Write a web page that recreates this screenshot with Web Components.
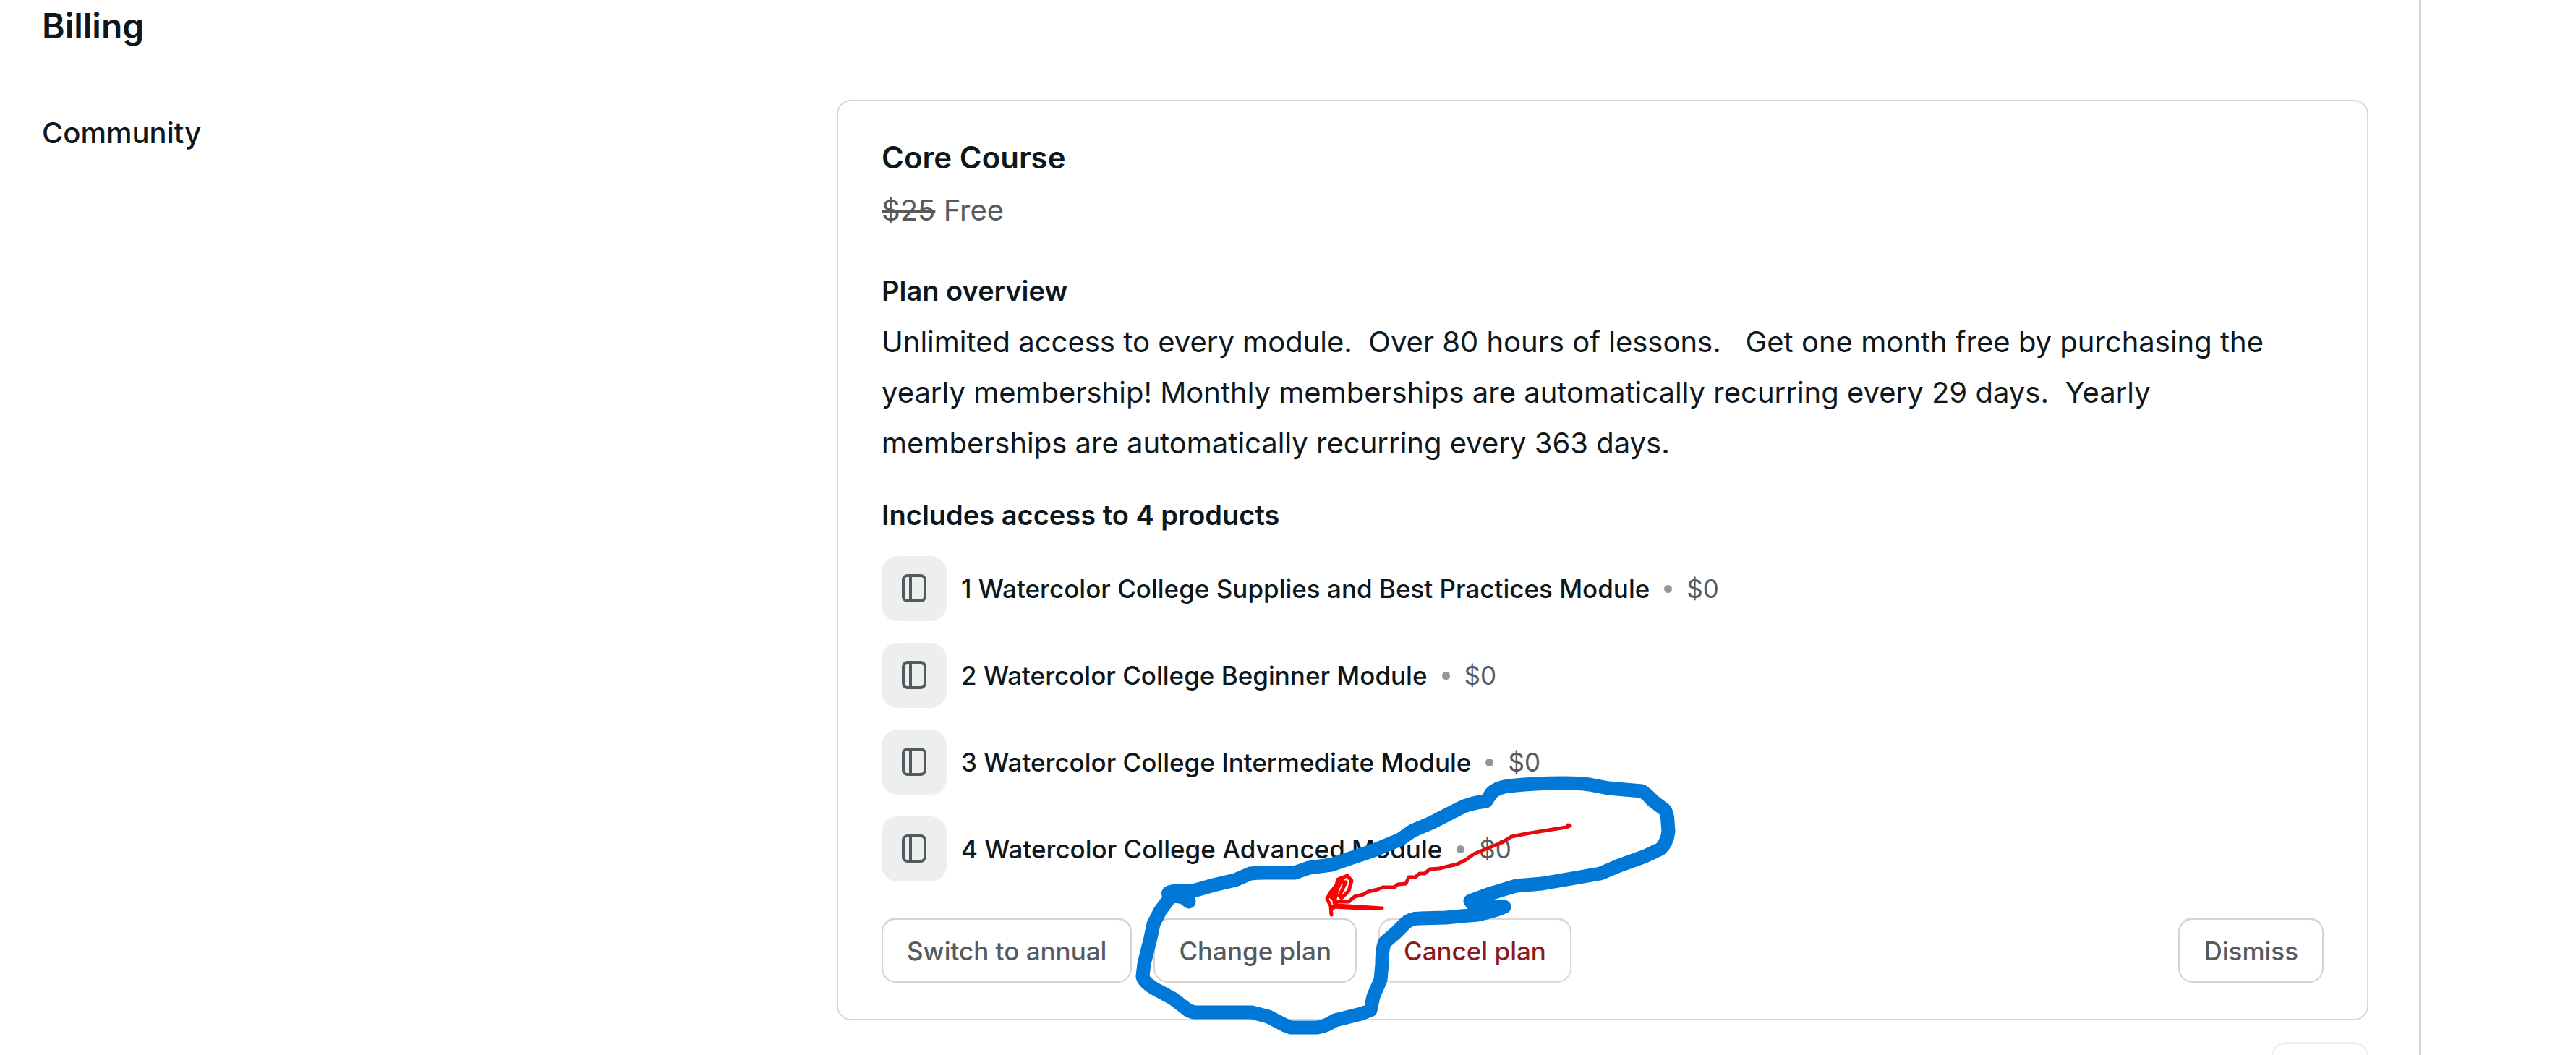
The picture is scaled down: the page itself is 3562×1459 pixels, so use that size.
<!DOCTYPE html>
<html lang="en">
<head>
<meta charset="UTF-8">
<title>Billing</title>
<style>
    body {
        margin: 0;
        min-height: 100vh;
        display: flex;
        overflow: hidden;
        background: #fff;
        color: #0e171b;
        font-family: Inter, "Liberation Sans", sans-serif;
    }
</style>
</head>
<body>
<billing-page heading="Billing">
    <billing-section label="Community">
        <plan-card name="Core Course" old-price="$25" price="Free">
            <span slot="overview">Unlimited access to every module.&nbsp; Over 80 hours of lessons.&nbsp;&nbsp; Get one month free by purchasing the yearly membership! Monthly memberships are automatically recurring every 29 days.&nbsp; Yearly memberships are automatically recurring every 363 days.</span>
            <product-item price="$0">1 Watercolor College Supplies and Best Practices Module</product-item>
            <product-item price="$0">2 Watercolor College Beginner Module</product-item>
            <product-item price="$0">3 Watercolor College Intermediate Module</product-item>
            <product-item price="$0">4 Watercolor College Advanced Module</product-item>
            <plan-button slot="actions">Switch to annual</plan-button>
            <plan-button slot="actions">Change plan</plan-button>
            <plan-button slot="actions" kind="danger">Cancel plan</plan-button>
            <plan-button slot="dismiss">Dismiss</plan-button>
            <hand-drawing slot="notes"></hand-drawing>
        </plan-card>
        <plan-button slot="footer" kind="faint"></plan-button>
    </billing-section>
</billing-page>

<script>
class BillingPage extends HTMLElement {
    constructor() {
        super();
        this.attachShadow({ mode: 'open' });
    }

    connectedCallback() {
        this.shadowRoot.innerHTML = `
            <style>
                :host {
                    display: block;
                    flex: 1;
                    box-sizing: border-box;
                    margin-right: 215px;
                    padding: 0 70px 0 58px;
                    border-right: 2px solid #d8d8d8;
                }

                h1 {
                    margin: 0 0 66px;
                    font-size: 48px;
                    font-weight: 600;
                    line-height: 72px;
                }
            </style>
            <h1>${this.getAttribute('heading')}</h1>
            <slot></slot>
        `;
    }
}

class BillingSection extends HTMLElement {
    constructor() {
        super();
        this.attachShadow({ mode: 'open' });
    }

    connectedCallback() {
        this.shadowRoot.innerHTML = `
            <style>
                :host {
                    display: grid;
                    grid-template-columns: 1099px 1fr;
                }

                h2 {
                    margin: 16px 0 0;
                    font-size: 40px;
                    font-weight: 500;
                    line-height: 60px;
                }

                .content {
                    display: flex;
                    flex-direction: column;
                    gap: 30px;
                }

                .footer {
                    display: flex;
                    justify-content: flex-end;
                }
            </style>
            <h2>${this.getAttribute('label')}</h2>
            <div class="content">
                <slot></slot>
                <div class="footer"><slot name="footer"></slot></div>
            </div>
        `;
    }
}

class PlanCard extends HTMLElement {
    constructor() {
        super();
        this.attachShadow({ mode: 'open' });
    }

    connectedCallback() {
        const total = this.querySelectorAll('product-item').length;

        this.shadowRoot.innerHTML = `
            <style>
                :host {
                    display: block;
                    position: relative;
                    padding: 48px 60px 50px;
                    border: 2px solid #d8d8d8;
                    border-radius: 20px;
                }

                h3, h4, p {
                    margin: 0;
                }

                h3 {
                    font-size: 42px;
                    font-weight: 600;
                    line-height: 60px;
                }

                h4 {
                    font-size: 38px;
                    font-weight: 600;
                    line-height: 60px;
                }

                .price {
                    margin: 8px 0 46px;
                    color: #555b5e;
                    font-size: 40px;
                    line-height: 70px;
                }

                .overview {
                    margin: 6px 0 34px;
                    font-size: 40px;
                    line-height: 70px;
                }

                .products {
                    display: flex;
                    flex-direction: column;
                    gap: 30px;
                    margin: 27px 0 50px;
                }

                .actions {
                    display: flex;
                    gap: 30px;
                }

                .dismiss {
                    margin-left: auto;
                }
            </style>
            <h3>${this.getAttribute('name')}</h3>
            <p class="price"><s>${this.getAttribute('old-price')}</s> ${this.getAttribute('price')}</p>
            <h4>Plan overview</h4>
            <p class="overview"><slot name="overview"></slot></p>
            <h4>Includes access to ${total} products</h4>
            <div class="products"><slot></slot></div>
            <div class="actions">
                <slot name="actions"></slot>
                <div class="dismiss"><slot name="dismiss"></slot></div>
            </div>
            <slot name="notes"></slot>
        `;
    }
}

class ProductItem extends HTMLElement {
    constructor() {
        super();
        this.attachShadow({ mode: 'open' });
    }

    connectedCallback() {
        this.shadowRoot.innerHTML = `
            <style>
                :host {
                    display: flex;
                    align-items: center;
                    gap: 20px;
                    font-size: 35px;
                    line-height: 54px;
                }

                .tile {
                    display: grid;
                    place-items: center;
                    width: 90px;
                    height: 90px;
                    border-radius: 22px;
                    background: #eceef0;
                }

                .name {
                    font-weight: 500;
                }

                .dot {
                    width: 11px;
                    height: 11px;
                    border-radius: 50%;
                    background: #8f979a;
                }

                .price {
                    color: #555b5e;
                }
            </style>
            <div class="tile">
                <svg width="34" height="40" viewBox="0 0 34 40" fill="none" stroke="#54595c" stroke-width="4">
                    <rect x="2" y="2" width="30" height="35" rx="6"/>
                    <path d="M12 2v35"/>
                </svg>
            </div>
            <span class="name"><slot></slot></span>
            <span class="dot"></span>
            <span class="price">${this.getAttribute('price')}</span>
        `;
    }
}

class PlanButton extends HTMLElement {
    constructor() {
        super();
        this.attachShadow({ mode: 'open' });
    }

    connectedCallback() {
        this.shadowRoot.innerHTML = `
            <style>
                :host {
                    display: block;
                }

                button {
                    display: block;
                    box-sizing: border-box;
                    min-width: 134px;
                    height: 90px;
                    padding: 0 33px;
                    border: 2px solid #d4d4d4;
                    border-top-width: 3px;
                    border-radius: 20px;
                    background: #fff;
                    color: #555b5e;
                    font-family: inherit;
                    font-size: 35px;
                    font-weight: 500;
                    line-height: 54px;
                    cursor: pointer;
                }

                :host([kind="danger"]) button {
                    border-color: #e4d5d5;
                    color: #8b1a1c;
                }

                :host([kind="faint"]) button {
                    border-color: #efefef;
                }
            </style>
            <button type="button"><slot></slot></button>
        `;
    }
}

// Pen marks laid over the card, drawn in the card's own pixels
class HandDrawing extends HTMLElement {
    constructor() {
        super();
        this.attachShadow({ mode: 'open' });
    }

    connectedCallback() {
        this.shadowRoot.innerHTML = `
            <style>
                :host {
                    position: absolute;
                    left: 401px;
                    top: 920px;
                    pointer-events: none;
                }

                svg {
                    display: block;
                }
            </style>
            <svg width="780" height="390" viewBox="1560 1060 780 390" fill="none" stroke-linecap="round" stroke-linejoin="round">
                <path stroke="#0078d7" stroke-width="19" d="M1644 1247 L1636 1241 L1618 1238 Q1612 1235 1620 1233 Q1630 1231 1650 1232 L1678 1224 L1708 1217 L1729 1208 Q1738 1207 1749 1207 L1790 1207 L1810 1200 L1841 1196 L1867 1187 L1897 1177 L1936 1161 L1953 1149 L1979 1138 L2020 1117 Q2035 1110 2055 1108 L2062 1097 Q2070 1089 2086 1087 Q2122 1083 2162 1083 Q2185 1083 2198 1085 L2224 1090 L2270 1094 Q2275 1096 2285 1107 L2302 1120 Q2306 1127 2306 1137 L2307 1150 Q2305 1166 2296 1174 L2275 1184 L2239 1197 L2213 1208 L2173 1215 L2132 1222 L2096 1225 L2060 1236 L2033 1246 L2037 1251 L2080 1254 Q2070 1259 2043 1265 L1999 1269 L1963 1270 Q1950 1270 1943 1277 L1930 1290 L1915 1303 Q1911 1311 1911 1333 L1909 1355 L1899 1378 L1895 1397 L1882 1402 L1846 1411 Q1832 1420 1821 1421 L1785 1421 L1777 1418 L1754 1406 L1731 1400 L1652 1400 Q1644 1399 1639 1394 L1622 1381 L1596 1367 Q1580 1357 1580 1350 L1582 1333 L1591 1297 L1595 1278 L1604 1260 L1615 1245 L1620 1238 L1644 1240"/>
                <path stroke="#e60a10" stroke-width="5" d="M2168 1141 L2171 1142 L2166 1144 L2153 1146 L2110 1153 L2090 1157 L2077 1165 L2050 1176 L2038 1181 L2027 1189 L2015 1195 L1990 1201 L1977 1202 L1970 1208 L1963 1208 L1957 1213 L1948 1213 L1944 1222 L1933 1223 L1928 1227 L1912 1227 L1905 1230 L1892 1233 L1885 1237 L1873 1240 L1865 1247 L1848 1247"/>
                <path stroke="#ff0000" stroke-width="5" d="M1841 1265 L1840 1253 L1835 1243 L1839 1235 L1848 1224 L1850 1216 L1863 1211 L1869 1218 L1865 1232 L1855 1242 L1852 1239 L1861 1220 L1852 1219 L1846 1234 L1840 1240 L1848 1248 L1841 1258 L1848 1252 L1880 1254 L1911 1256 L1880 1256 L1843 1254 M1845 1248 L1849 1230 L1856 1215"/>
            </svg>
        `;
    }
}

customElements.define('billing-page', BillingPage);
customElements.define('billing-section', BillingSection);
customElements.define('plan-card', PlanCard);
customElements.define('product-item', ProductItem);
customElements.define('plan-button', PlanButton);
customElements.define('hand-drawing', HandDrawing);
</script>
</body>
</html>
